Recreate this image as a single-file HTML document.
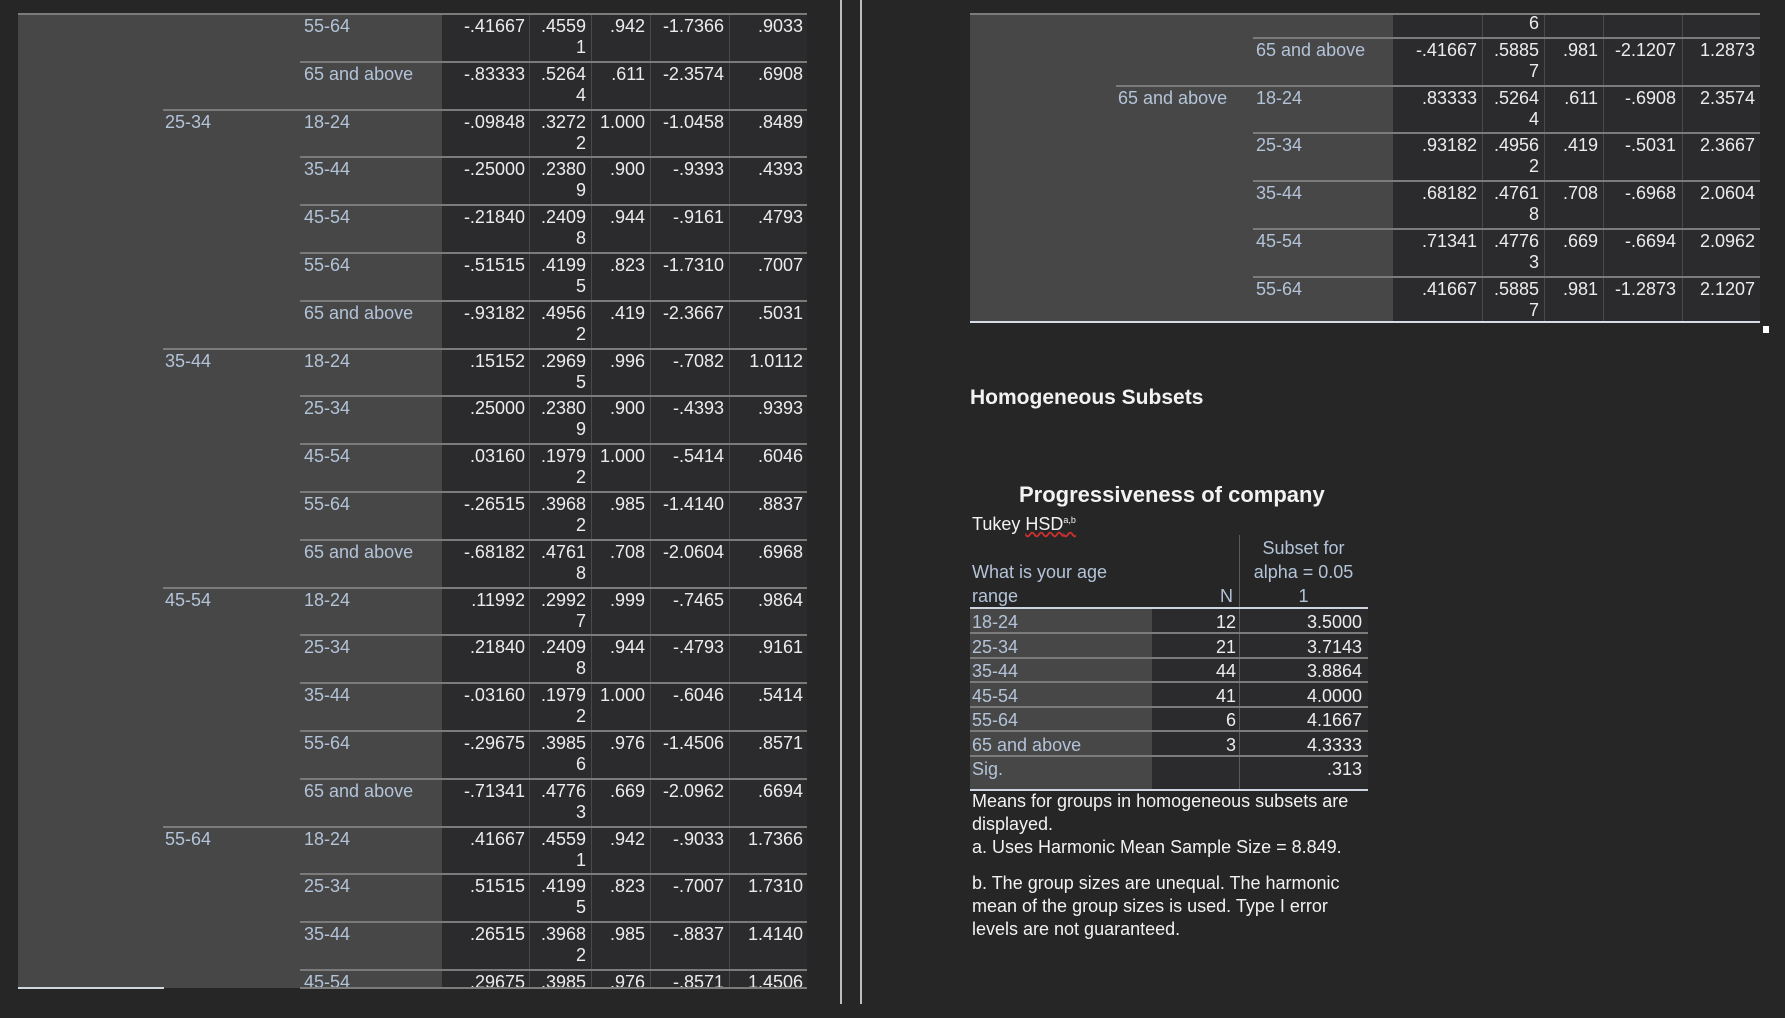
<!DOCTYPE html>
<html><head><meta charset="utf-8"><style>
*{margin:0;padding:0;box-sizing:border-box}
body{width:1785px;height:1004px;background:#262626;position:relative;overflow:hidden;font-family:"Liberation Sans",Arial,sans-serif;font-size:18px;color:#ececec}
.a{position:absolute;white-space:nowrap;line-height:21px}
.lb{color:#b3c3d8}
.ln{position:absolute;height:2px;background:#7b7b7b}
.vd{position:absolute;width:1px;background:#4a4a4c}
.row{position:absolute;left:0;width:1785px;height:48px}
.row .a{top:2px}
.c1{left:440px;width:85px;text-align:right}
.c2{left:529px;width:57px;text-align:right}
.c3{left:591px;width:54px;text-align:right}
.c4{left:650px;width:74px;text-align:right}
.c5{left:729px;width:74px;text-align:right}
.c2b{left:529px;width:57px;text-align:right;top:23px!important}
.g1{left:165px}.g2{left:304px}
.d1{left:1393px;width:84px;text-align:right}
.d2{left:1482px;width:57px;text-align:right}
.d3{left:1544px;width:54px;text-align:right}
.d4{left:1603px;width:73px;text-align:right}
.d5{left:1682px;width:73px;text-align:right}
.d2b{left:1482px;width:57px;text-align:right;top:23px!important}
.h1{left:1118px}.h2{left:1256px}
</style></head><body>
<div style="position:absolute;left:840px;top:0;width:2px;height:1004px;background:#bdbdbd"></div>
<div style="position:absolute;left:860px;top:0;width:2px;height:1004px;background:#bdbdbd"></div>

<div style="position:absolute;left:18px;top:14px;width:424px;height:974px;background:#474747"></div>
<div style="position:absolute;left:442px;top:14px;width:365px;height:990px;background:#2b2b2e"></div>
<div class="vd" style="left:529px;top:14px;height:990px"></div>
<div class="vd" style="left:591px;top:14px;height:990px"></div>
<div class="vd" style="left:650px;top:14px;height:990px"></div>
<div class="vd" style="left:729px;top:14px;height:990px"></div>

<div class="row" style="top:14px"><div class="ln" style="left:18px;width:789px;top:-1px"></div><span class="a lb g2">55-64</span><span class="a c1">-.41667</span><span class="a c2">.4559</span><span class="a c2b">1</span><span class="a c3">.942</span><span class="a c4">-1.7366</span><span class="a c5">.9033</span></div>
<div class="row" style="top:62px"><div class="ln" style="left:300px;width:507px;top:-1px"></div><span class="a lb g2">65 and above</span><span class="a c1">-.83333</span><span class="a c2">.5264</span><span class="a c2b">4</span><span class="a c3">.611</span><span class="a c4">-2.3574</span><span class="a c5">.6908</span></div>
<div class="row" style="top:110px"><div class="ln" style="left:163px;width:644px;top:-1px"></div><span class="a lb g1">25-34</span><span class="a lb g2">18-24</span><span class="a c1">-.09848</span><span class="a c2">.3272</span><span class="a c2b">2</span><span class="a c3">1.000</span><span class="a c4">-1.0458</span><span class="a c5">.8489</span></div>
<div class="row" style="top:157px"><div class="ln" style="left:300px;width:507px;top:-1px"></div><span class="a lb g2">35-44</span><span class="a c1">-.25000</span><span class="a c2">.2380</span><span class="a c2b">9</span><span class="a c3">.900</span><span class="a c4">-.9393</span><span class="a c5">.4393</span></div>
<div class="row" style="top:205px"><div class="ln" style="left:300px;width:507px;top:-1px"></div><span class="a lb g2">45-54</span><span class="a c1">-.21840</span><span class="a c2">.2409</span><span class="a c2b">8</span><span class="a c3">.944</span><span class="a c4">-.9161</span><span class="a c5">.4793</span></div>
<div class="row" style="top:253px"><div class="ln" style="left:300px;width:507px;top:-1px"></div><span class="a lb g2">55-64</span><span class="a c1">-.51515</span><span class="a c2">.4199</span><span class="a c2b">5</span><span class="a c3">.823</span><span class="a c4">-1.7310</span><span class="a c5">.7007</span></div>
<div class="row" style="top:301px"><div class="ln" style="left:300px;width:507px;top:-1px"></div><span class="a lb g2">65 and above</span><span class="a c1">-.93182</span><span class="a c2">.4956</span><span class="a c2b">2</span><span class="a c3">.419</span><span class="a c4">-2.3667</span><span class="a c5">.5031</span></div>
<div class="row" style="top:349px"><div class="ln" style="left:163px;width:644px;top:-1px"></div><span class="a lb g1">35-44</span><span class="a lb g2">18-24</span><span class="a c1">.15152</span><span class="a c2">.2969</span><span class="a c2b">5</span><span class="a c3">.996</span><span class="a c4">-.7082</span><span class="a c5">1.0112</span></div>
<div class="row" style="top:396px"><div class="ln" style="left:300px;width:507px;top:-1px"></div><span class="a lb g2">25-34</span><span class="a c1">.25000</span><span class="a c2">.2380</span><span class="a c2b">9</span><span class="a c3">.900</span><span class="a c4">-.4393</span><span class="a c5">.9393</span></div>
<div class="row" style="top:444px"><div class="ln" style="left:300px;width:507px;top:-1px"></div><span class="a lb g2">45-54</span><span class="a c1">.03160</span><span class="a c2">.1979</span><span class="a c2b">2</span><span class="a c3">1.000</span><span class="a c4">-.5414</span><span class="a c5">.6046</span></div>
<div class="row" style="top:492px"><div class="ln" style="left:300px;width:507px;top:-1px"></div><span class="a lb g2">55-64</span><span class="a c1">-.26515</span><span class="a c2">.3968</span><span class="a c2b">2</span><span class="a c3">.985</span><span class="a c4">-1.4140</span><span class="a c5">.8837</span></div>
<div class="row" style="top:540px"><div class="ln" style="left:300px;width:507px;top:-1px"></div><span class="a lb g2">65 and above</span><span class="a c1">-.68182</span><span class="a c2">.4761</span><span class="a c2b">8</span><span class="a c3">.708</span><span class="a c4">-2.0604</span><span class="a c5">.6968</span></div>
<div class="row" style="top:588px"><div class="ln" style="left:163px;width:644px;top:-1px"></div><span class="a lb g1">45-54</span><span class="a lb g2">18-24</span><span class="a c1">.11992</span><span class="a c2">.2992</span><span class="a c2b">7</span><span class="a c3">.999</span><span class="a c4">-.7465</span><span class="a c5">.9864</span></div>
<div class="row" style="top:635px"><div class="ln" style="left:300px;width:507px;top:-1px"></div><span class="a lb g2">25-34</span><span class="a c1">.21840</span><span class="a c2">.2409</span><span class="a c2b">8</span><span class="a c3">.944</span><span class="a c4">-.4793</span><span class="a c5">.9161</span></div>
<div class="row" style="top:683px"><div class="ln" style="left:300px;width:507px;top:-1px"></div><span class="a lb g2">35-44</span><span class="a c1">-.03160</span><span class="a c2">.1979</span><span class="a c2b">2</span><span class="a c3">1.000</span><span class="a c4">-.6046</span><span class="a c5">.5414</span></div>
<div class="row" style="top:731px"><div class="ln" style="left:300px;width:507px;top:-1px"></div><span class="a lb g2">55-64</span><span class="a c1">-.29675</span><span class="a c2">.3985</span><span class="a c2b">6</span><span class="a c3">.976</span><span class="a c4">-1.4506</span><span class="a c5">.8571</span></div>
<div class="row" style="top:779px"><div class="ln" style="left:300px;width:507px;top:-1px"></div><span class="a lb g2">65 and above</span><span class="a c1">-.71341</span><span class="a c2">.4776</span><span class="a c2b">3</span><span class="a c3">.669</span><span class="a c4">-2.0962</span><span class="a c5">.6694</span></div>
<div class="row" style="top:827px"><div class="ln" style="left:163px;width:644px;top:-1px"></div><span class="a lb g1">55-64</span><span class="a lb g2">18-24</span><span class="a c1">.41667</span><span class="a c2">.4559</span><span class="a c2b">1</span><span class="a c3">.942</span><span class="a c4">-.9033</span><span class="a c5">1.7366</span></div>
<div class="row" style="top:874px"><div class="ln" style="left:300px;width:507px;top:-1px"></div><span class="a lb g2">25-34</span><span class="a c1">.51515</span><span class="a c2">.4199</span><span class="a c2b">5</span><span class="a c3">.823</span><span class="a c4">-.7007</span><span class="a c5">1.7310</span></div>
<div class="row" style="top:922px"><div class="ln" style="left:300px;width:507px;top:-1px"></div><span class="a lb g2">35-44</span><span class="a c1">.26515</span><span class="a c2">.3968</span><span class="a c2b">2</span><span class="a c3">.985</span><span class="a c4">-.8837</span><span class="a c5">1.4140</span></div>
<div class="row" style="top:970px"><div class="ln" style="left:300px;width:507px;top:-1px"></div><span class="a lb g2">45-54</span><span class="a c1">.29675</span><span class="a c2">.3985</span><span class="a c3">.976</span><span class="a c4">-.8571</span><span class="a c5">1.4506</span></div>
<div class="ln" style="left:18px;width:146px;top:987px;background:#cfd6de"></div>
<div class="ln" style="left:300px;width:507px;top:987px"></div>
<div style="position:absolute;left:0;top:989px;width:840px;height:15px;background:#262626"></div>

<div style="position:absolute;left:970px;top:14px;width:423px;height:308px;background:#474747"></div>
<div style="position:absolute;left:1393px;top:14px;width:367px;height:308px;background:#2b2b2e"></div>
<div class="vd" style="left:1482px;top:14px;height:308px"></div>
<div class="vd" style="left:1544px;top:14px;height:308px"></div>
<div class="vd" style="left:1603px;top:14px;height:308px"></div>
<div class="vd" style="left:1682px;top:14px;height:308px"></div>
<div class="ln" style="left:970px;width:790px;top:13px"></div>
<div class="row" style="top:-10px"><span class="a d2b">6</span></div>
<div class="row" style="top:38px"><div class="ln" style="left:1253px;width:507px;top:-1px"></div><span class="a lb h2">65 and above</span><span class="a d1">-.41667</span><span class="a d2">.5885</span><span class="a d2b">7</span><span class="a d3">.981</span><span class="a d4">-2.1207</span><span class="a d5">1.2873</span></div>
<div class="row" style="top:86px"><div class="ln" style="left:1116px;width:644px;top:-1px"></div><span class="a lb h1">65 and above</span><span class="a lb h2">18-24</span><span class="a d1">.83333</span><span class="a d2">.5264</span><span class="a d2b">4</span><span class="a d3">.611</span><span class="a d4">-.6908</span><span class="a d5">2.3574</span></div>
<div class="row" style="top:133px"><div class="ln" style="left:1253px;width:507px;top:-1px"></div><span class="a lb h2">25-34</span><span class="a d1">.93182</span><span class="a d2">.4956</span><span class="a d2b">2</span><span class="a d3">.419</span><span class="a d4">-.5031</span><span class="a d5">2.3667</span></div>
<div class="row" style="top:181px"><div class="ln" style="left:1253px;width:507px;top:-1px"></div><span class="a lb h2">35-44</span><span class="a d1">.68182</span><span class="a d2">.4761</span><span class="a d2b">8</span><span class="a d3">.708</span><span class="a d4">-.6968</span><span class="a d5">2.0604</span></div>
<div class="row" style="top:229px"><div class="ln" style="left:1253px;width:507px;top:-1px"></div><span class="a lb h2">45-54</span><span class="a d1">.71341</span><span class="a d2">.4776</span><span class="a d2b">3</span><span class="a d3">.669</span><span class="a d4">-.6694</span><span class="a d5">2.0962</span></div>
<div class="row" style="top:277px"><div class="ln" style="left:1253px;width:507px;top:-1px"></div><span class="a lb h2">55-64</span><span class="a d1">.41667</span><span class="a d2">.5885</span><span class="a d2b">7</span><span class="a d3">.981</span><span class="a d4">-1.2873</span><span class="a d5">2.1207</span></div>
<div class="ln" style="left:970px;width:790px;top:321px;background:#d5dde6"></div>
<div style="position:absolute;left:1763px;top:326px;width:6px;height:7px;background:#fff"></div>

<div class="a" style="left:970px;top:386px;font-size:21px;font-weight:bold;line-height:24px;color:#f2f2f2">Homogeneous Subsets</div>
<div class="a" style="left:1019px;top:482px;font-size:22px;font-weight:bold;line-height:26px;color:#f2f2f2">Progressiveness of company</div>
<div class="a" style="left:972px;top:510px;color:#f2f2f2">Tukey <span style="text-decoration:underline wavy #d03030">HSD<sup style="font-size:9px">a,b</sup></span></div>

<div style="position:absolute;left:1239px;top:535px;width:1px;height:254px;background:#5a5a5a"></div>
<div class="a lb" style="left:1239px;width:129px;top:536px;text-align:center;line-height:24px">Subset for<br>alpha = 0.05<br>1</div>
<div class="a lb" style="left:972px;top:560px;line-height:24px">What is your age<br>range</div>
<div class="a lb" style="left:1185px;top:584px;width:48px;text-align:right;line-height:24px">N</div>
<div class="ln" style="left:970px;width:398px;top:607px;background:#cdd6e0"></div>
<div style="position:absolute;left:970px;top:609px;width:182px;height:180px;background:#474747"></div>
<div style="position:absolute;left:1152px;top:609px;width:216px;height:180px;background:#2b2b2e"></div>
<div style="position:absolute;left:1239px;top:609px;width:1px;height:180px;background:#5a5a5a"></div>
<div class="ln" style="left:970px;width:398px;top:632px"></div>
<div class="ln" style="left:970px;width:398px;top:657px"></div>
<div class="ln" style="left:970px;width:398px;top:681px"></div>
<div class="ln" style="left:970px;width:398px;top:706px"></div>
<div class="ln" style="left:970px;width:398px;top:730px"></div>
<div class="ln" style="left:970px;width:398px;top:755px"></div>
<div class="ln" style="left:970px;width:398px;top:789px;background:#cdd6e0"></div>
<div class="a lb" style="left:972px;top:610px;line-height:24.5px">18-24<br>25-34<br>35-44<br>45-54<br>55-64<br>65 and above<br>Sig.</div>
<div class="a" style="left:1180px;width:56px;text-align:right;top:610px;line-height:24.5px">12<br>21<br>44<br>41<br>6<br>3</div>
<div class="a" style="left:1260px;width:102px;text-align:right;top:610px;line-height:24.5px">3.5000<br>3.7143<br>3.8864<br>4.0000<br>4.1667<br>4.3333<br>.313</div>

<div class="a" style="left:972px;top:790px;line-height:23px;color:#f2f2f2">Means for groups in homogeneous subsets are<br>displayed.<br>a. Uses Harmonic Mean Sample Size = 8.849.</div>
<div class="a" style="left:972px;top:872px;line-height:23px;color:#f2f2f2">b. The group sizes are unequal. The harmonic<br>mean of the group sizes is used. Type I error<br>levels are not guaranteed.</div>
</body></html>
